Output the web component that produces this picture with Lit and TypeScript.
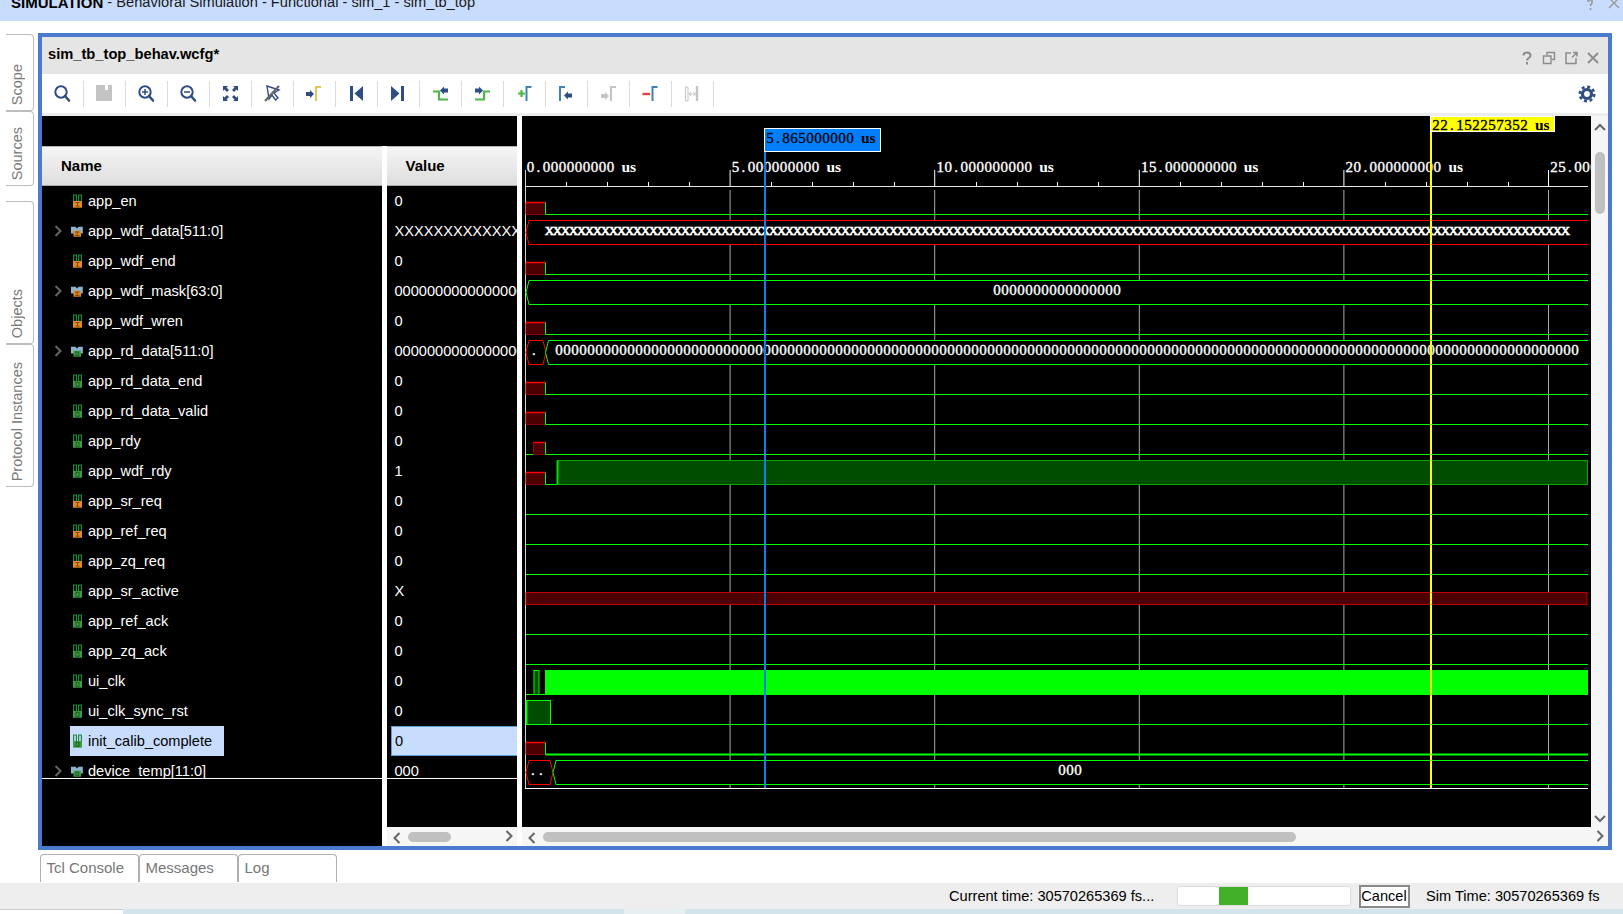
import { LitElement, html, css, svg } from "lit";
import { customElement } from "lit/decorators.js";

type Sig = { n: string; v: string; bus?: boolean; out?: boolean };
const Z16 = "0".repeat(16);
const signals: Sig[] = [
  { n: "app_en", v: "0" },
  { n: "app_wdf_data[511:0]", v: "X".repeat(128), bus: true },
  { n: "app_wdf_end", v: "0" },
  { n: "app_wdf_mask[63:0]", v: Z16, bus: true },
  { n: "app_wdf_wren", v: "0" },
  { n: "app_rd_data[511:0]", v: "0".repeat(128), bus: true, out: true },
  { n: "app_rd_data_end", v: "0", out: true },
  { n: "app_rd_data_valid", v: "0", out: true },
  { n: "app_rdy", v: "0", out: true },
  { n: "app_wdf_rdy", v: "1", out: true },
  { n: "app_sr_req", v: "0" },
  { n: "app_ref_req", v: "0" },
  { n: "app_zq_req", v: "0" },
  { n: "app_sr_active", v: "X", out: true },
  { n: "app_ref_ack", v: "0", out: true },
  { n: "app_zq_ack", v: "0", out: true },
  { n: "ui_clk", v: "0", out: true },
  { n: "ui_clk_sync_rst", v: "0", out: true },
  { n: "init_calib_complete", v: "0", out: true },
  { n: "device_temp[11:0]", v: "000", bus: true, out: true },
];
const SELECTED = 18;
const END = 1588;
const RED = "#ff0000", GRN = "#00ff00", DRED = "#4d0000", DGRN = "#004d00";
const NAVY = "#2f4c84", GREY = "#c4c4c4", BLUE = "#3f82b8", GG = "#4cb848", YEL = "#e2c95e";

const low = (i: number) => 214.5 + 30 * i;
const high = (i: number) => 202.5 + 30 * i;
const btop = (i: number) => 190.5 + 30 * i;
const bbot = (i: number) => 214.5 + 30 * i;

const line = (x1: number, y1: number, x2: number, y2: number, c: string, w = 1) =>
  svg`<line x1=${x1} y1=${y1} x2=${x2} y2=${y2} stroke=${c} stroke-width=${w}></line>`;

const xBox = (i: number, x0 = 526, x1 = 545.5) => svg`
  <rect x=${x0} y=${high(i)} width=${x1 - x0} height=${low(i) - high(i)} fill=${DRED}></rect>
  ${line(x0, high(i), x0, low(i), "#900000")}
  ${line(x0, low(i), x1, low(i), "#900000")}
  ${line(x0, high(i), x1, high(i), RED, 1.5)}
  ${line(x1, high(i), x1, low(i), GRN)}`;

const busPath = (i: number, x0: number, x1: number | null) => {
  const t = btop(i), b = bbot(i), m = (t + b) / 2;
  return x1 === null
    ? `M${END} ${t}H${x0 + 3}L${x0} ${m}L${x0 + 3} ${b}H${END}`
    : `M${x0 + 3} ${t}H${x1 - 3}L${x1} ${m}L${x1 - 3} ${b}H${x0 + 3}L${x0} ${m}Z`;
};
const bus = (i: number, x0: number, x1: number | null, c: string) =>
  svg`<path d=${busPath(i, x0, x1)} fill="#000" stroke=${c} stroke-width="1"></path>`;

// Bitmap-style fixed pitch: every glyph of a serif face sits in its own 8px cell.
const cellX = (x: number, t: string) =>
  [...t].map((ch, k) => x + 8 * k + (ch === "." ? 2 : ch === "X" ? -0.7 : 0.2)).join(" ");
const wtext = (x: number, y: number, t: string, cls = "mono") =>
  svg`<text class=${cls} x=${cellX(x, t)} y=${y} fill="#fff" stroke="#fff">${t}</text>`;
const timeText = (x: number, y: number, t: string, fill: string) =>
  svg`<text class="mono" x=${cellX(x, t + " ")} y=${y} fill=${fill} stroke=${fill}>${t} <tspan class="b" x=${`${x + 8 * (t.length + 1) - 1} ${x + 8 * (t.length + 2) - 0.5}`}>us</tspan></text>`;

function waves() {
  const gx = [0, 1, 2, 3, 4, 5].map((k) => 525.5 + 204.6 * k);
  const ticks: number[] = [];
  for (let k = 1; k < 26; k++) if (k % 5) ticks.push(525.5 + 40.92 * k);
  return svg`
    <svg class="wave" viewBox="522 116 1069 711" width="1069" height="711">
      ${gx.map((x) => line(x, 190, x, 788, "#a8a8a8"))}
      ${gx.map((x) => line(x, 170, x, 186, "#fff"))}
      ${line(525.5, 170, 525.5, 788, "#d0d0d0")}
      ${line(525, 186.5, END, 186.5, "#e8e8e8")}
      ${ticks.map((x) => line(Math.round(x) + 0.5, 182, Math.round(x) + 0.5, 186, "#fff"))}
      ${["0.000000000", "5.000000000", "10.000000000", "15.000000000", "20.000000000", "25.000000000"].map(
        (t, k) => timeText(k === 0 ? 526.5 : gx[k] + 1.5, 171.5, t, "#fff")
      )}

      ${xBox(0)}${line(545.5, low(0), END, low(0), GRN)}
      ${bus(1, 526, null, RED)}${wtext(545.5, btop(1) + 14, signals[1].v, "mono xs")}
      ${xBox(2)}${line(545.5, low(2), END, low(2), GRN)}
      ${bus(3, 526, null, GRN)}${wtext(993, btop(3) + 14.5, Z16)}
      ${xBox(4)}${line(545.5, low(4), END, low(4), GRN)}
      ${bus(5, 526, 546, RED)}${bus(5, 545.5, null, GRN)}${wtext(530, btop(5) + 14.5, ".")}${wtext(555, btop(5) + 14.5, signals[5].v)}
      ${xBox(6)}${line(545.5, low(6), END, low(6), GRN)}
      ${xBox(7)}${line(545.5, low(7), END, low(7), GRN)}
      ${line(526, low(8), 533.5, low(8), GRN)}${xBox(8, 533.5)}${line(545.5, low(8), END, low(8), GRN)}
      ${xBox(9)}${line(545.5, low(9), 557.5, low(9), GRN)}
      <rect x="557.5" y="460.5" width=${END - 558} height="24" fill=${DGRN} stroke="#00a800" stroke-width="1"></rect>
      ${line(557.5, 460.5, 557.5, 484.5, "#00e000", 2)}
      ${line(526, low(10), END, low(10), GRN)}
      ${line(526, low(11), END, low(11), GRN)}
      ${line(526, low(12), END, low(12), GRN)}
      <rect x="526" y="592.5" width=${END - 527} height="12" fill=${DRED} stroke="#c00000" stroke-width="1"></rect>
      ${line(526, low(14), END, low(14), GRN)}
      ${line(526, low(15), END, low(15), GRN)}
      ${line(526, 694.5, 534, 694.5, GRN)}
      <rect x="534" y="670.5" width="5" height="24" fill=${DGRN} stroke=${GRN} stroke-width="1"></rect>
      ${line(539, 694.5, 545, 694.5, GRN)}
      <rect x="545" y="670" width=${END - 545} height="25" fill=${GRN}></rect>
      <rect x="526.5" y="700.5" width="24" height="24" fill=${DGRN} stroke=${GRN} stroke-width="1"></rect>
      ${line(526.5, 700.5, 526.5, 724.5, GRN, 2)}
      ${line(550.5, low(17), END, low(17), GRN)}
      ${xBox(18, 526, 545.5)}${line(545.5, low(18), END, low(18), GRN, 2)}
      ${bus(19, 526, 553, RED)}${bus(19, 553, null, GRN)}${wtext(529, btop(19) + 14.5, "..")}${wtext(1058, btop(19) + 14.5, "000")}
      ${line(525, 788.5, END, 788.5, "#fff")}

      ${line(765, 152, 765, 788, "#0a80e8", 2)}
      <rect x="764.5" y="128.5" width="116" height="23" fill="#0080ff" stroke="#fff" stroke-width="1"></rect>
      ${timeText(766, 143, "5.865000000", "#000")}
      ${line(1431, 131, 1431, 788, "#ffff00", 2)}
      <rect x="1430.5" y="116.5" width="124" height="15" fill="#ffff00" stroke="#fff" stroke-width="1"></rect>
      ${timeText(1432, 129.5, "22.152257352", "#000")}
    </svg>`;
}

const sigIcon = (s: Sig) => {
  const c = s.out ? "#3f9a45" : "#e58a22";
  const letter = s.out ? "#1f5f25" : "#7a4a10";
  if (s.bus) {
    return svg`<svg class="sig" viewBox="0 0 16 16" width="16" height="16">
      <path d="M2 3.7H6.5L8 5.5L9.5 3.7H13.8V10.5H2Z" fill="#8db4cf"></path>
      <rect x="4.5" y="7.7" width="7.5" height="6" fill=${c}></rect>
      ${s.out
        ? svg`<rect x="6.8" y="9" width="2.8" height="3.4" fill="none" stroke=${letter}></rect>`
        : svg`<path d="M6 9H10.5M8.2 9V12.4M6 12.4H10.5" fill="none" stroke=${letter}></path>`}
    </svg>`;
  }
  return svg`<svg class="sig" viewBox="0 0 16 16" width="16" height="16">
    <path d="M4.6 8V2H7.4V8M9.6 8V2H12.4V8" fill="none" stroke="#1f8a3a" stroke-width="1.2"></path>
    <rect x="4" y="8" width="9" height="6.7" fill=${c}></rect>
    ${s.out
      ? svg`<rect x="7" y="9.3" width="3" height="4" fill="none" stroke=${letter}></rect>`
      : svg`<path d="M6.5 9.5H10.5M8.5 9.5V13.2M6.5 13.2H10.5" fill="none" stroke=${letter}></path>`}
  </svg>`;
};

const mag = svg`<circle cx="11" cy="11" r="5.7" fill="none" stroke=${NAVY} stroke-width="2"></circle>
  <path d="M15 15L19 19.5" stroke=${NAVY} stroke-width="2.6" stroke-linecap="round"></path>`;
const gam = (x: number, c: string, w = 6) =>
  svg`<path d="M${x + 1} 20V6H${x + w}" fill="none" stroke=${c} stroke-width="2"></path>`;
const arrR = (x: number, y: number, c: string) =>
  svg`<path d="M${x} ${y - 2}H${x + 4}V${y - 4}L${x + 8} ${y}L${x + 4} ${y + 4}V${y + 2}H${x}Z" fill=${c}></path>`;
const arrL = (x: number, y: number, c: string) =>
  svg`<path d="M${x + 8} ${y - 2}H${x + 4}V${y - 4}L${x} ${y}L${x + 4} ${y + 4}V${y + 2}H${x + 8}Z" fill=${c}></path>`;

const toolIcons = [
  mag,
  svg`<path d="M4 4H20V20H4Z" fill=${GREY}></path><rect x="13" y="4" width="3" height="5" fill="#fff"></rect>`,
  svg`${mag}<path d="M8 11H14M11 8V14" stroke=${NAVY} stroke-width="1.5"></path>`,
  svg`${mag}<path d="M8 11H14" stroke=${NAVY} stroke-width="1.5"></path>`,
  svg`<path fill=${NAVY} d="M5 5H10L8.5 6.5L11 9L9 11L6.5 8.5L5 10ZM20 5V10L18.5 8.5L16 11L14 9L16.5 6.5L15 5ZM5 20V15L6.5 16.5L9 14L11 16L8.5 18.5L10 20ZM20 20H15L16.5 18.5L14 16L16 14L18.5 16.5L20 15Z"></path>`,
  svg`<path d="M7 5L19 9L14 12L18 17L15.5 19L12 14L9 18Z" fill="none" stroke=${NAVY} stroke-width="1.4"></path><path d="M5 20L19 5" stroke="#666" stroke-width="2.2"></path>`,
  svg`${arrR(4, 13, NAVY)}${gam(13, YEL)}`,
  svg`<path d="M6 5H9V20H6Z" fill=${NAVY}></path><path d="M19 5V20L10.5 12.5Z" fill=${NAVY}></path>`,
  svg`<path d="M15 5H18V20H15Z" fill=${NAVY}></path><path d="M5 5V20L13.5 12.5Z" fill=${NAVY}></path>`,
  svg`<path d="M5 10.5H11V18.5H20" fill="none" stroke=${GG} stroke-width="2.2"></path>${arrL(12, 9.5, NAVY)}`,
  svg`<path d="M5 18.5H14V10.5H20" fill="none" stroke=${GG} stroke-width="2.2"></path>${arrR(5, 9.5, NAVY)}`,
  svg`<path d="M6 12.5H13M9.5 9V16" stroke=${GG} stroke-width="2.2"></path>${gam(13.5, BLUE)}`,
  svg`${gam(5, BLUE)}${arrL(10, 14.5, NAVY)}`,
  svg`${arrR(5, 15, GREY)}${gam(14, GREY)}`,
  svg`<path d="M4.5 13H12" stroke="#e8403f" stroke-width="2.4"></path>${gam(13.5, BLUE)}`,
  svg`<path d="M5.5 6H8V20H5.5Z" fill="none" stroke=${GREY} stroke-width="1"></path><path d="M17 5V20" stroke=${GREY} stroke-width="2.4"></path><path d="M9 13H15.5M9 13L11 11M9 13L11 15M15.5 13L13.5 11M15.5 13L13.5 15" fill="none" stroke=${GREY}></path>`,
];

const chev = (d: string, c = "#666") =>
  svg`<svg class="chev" viewBox="0 0 10 14" width="10" height="14"><path d=${d} fill="none" stroke=${c} stroke-width="2"></path></svg>`;
const L = chev("M7.5 2L2.5 7L7.5 12");
const R = chev("M2.5 2L7.5 7L2.5 12");

@customElement("app-root")
export class AppRoot extends LitElement {
  static styles = css`
    :host { display: block; width: 1623px; height: 914px; overflow: hidden; background: #fff;
      font-family: "Liberation Sans", Arial, sans-serif; font-size: 14.5px; color: #000; }
    .root { display: flex; flex-direction: column; width: 1623px; height: 914px; }
    .top { height: 21px; flex: none; background: #c8dcfd; position: relative; overflow: hidden;
      display: flex; padding-left: 11px; line-height: 5px; font-size: 14.65px; color: #1a1a1a; }
    .top b { color: #000; white-space: pre; font-size: 15px; }
    .top-ic { margin-left: auto; display: flex; gap: 10px; padding-right: 3px; height: 10px; }
    .mid { height: 833px; flex: none; display: flex; }
    .side { width: 38px; flex: none; display: flex; flex-direction: column; padding-top: 13px; box-sizing: border-box; }
    .vtab { margin-left: 6px; width: 27.5px; box-sizing: border-box; border: 1px solid #bdbdbd; border-left: none;
      border-radius: 0 4px 4px 0; display: flex; align-items: flex-end; justify-content: center; color: #7a7a7a;
      font-size: 14.5px; padding-right: 4px; }
    .vtab span { writing-mode: vertical-rl; transform: rotate(180deg); padding-top: 5px; }
    .h76 { height: 77px; } .h75 { height: 75px; } .h142 { height: 143px; margin-top: 15px; }
    .h142b { height: 143px; }
    .frame { margin-top: 12px; width: 1574px; height: 817px; box-sizing: border-box; border: 4px solid #4a7bcd;
      display: flex; flex-direction: column; background: #fff; }
    .title { height: 37px; flex: none; background: #e5e5e5; display: flex; align-items: center; padding-left: 6px;
      font-weight: bold; font-size: 14.7px; }
    .title span { padding-bottom: 4px; }
    .wctl { margin-left: auto; display: flex; align-items: center; gap: 6px; padding: 5px 7px 0 0; }
    .wctl svg { display: block; }
    .tools { height: 39px; flex: none; display: flex; align-items: center; background: #fff; }
    .tb { width: 42px; height: 26px; box-sizing: border-box; border-right: 1px solid #dcdcdc; padding-right: 2px; display: flex;
      align-items: center; justify-content: center; }
    .tb svg { display: block; margin-top: -2px; }
    .gear { margin-left: auto; margin-right: 12px; display: block; }
    .sep { height: 3px; flex: none; background: #ececec; }
    .body { height: 730px; flex: none; display: grid; grid-template-columns: 340px 130px 1086px; column-gap: 5px; }
    .pane { display: flex; flex-direction: column; }
    .name { background: #000; height: 730px; }
    .spacer { height: 30px; flex: none; background: #000; }
    .spacer.wide { width: 345px; }
    .hdr { height: 40px; flex: none; box-sizing: border-box; background: linear-gradient(#f5f5f5, #dedede);
      border-top: 1px solid #b5b5b5; border-bottom: 1px solid #a8a8a8; font-weight: bold; font-size: 15px;
      display: flex; align-items: center; padding-bottom: 2px; }
    .hdr.n { padding-left: 19px; } .hdr.v { padding-left: 18.5px; }
    .list { height: 592px; flex: none; overflow: hidden; background: #000; color: #fff; font-size: 14.6px; }
    .rule { height: 1px; flex: none; background: #fff; }
    .row { height: 30px; display: flex; align-items: center; white-space: nowrap; overflow: hidden; }
    .row .exp { width: 28px; flex: none; display: flex; justify-content: flex-end; padding-right: 7px; box-sizing: border-box; }
    .sig { display: block; margin-left: -1px; }
    .nm { display: flex; align-items: center; height: 30px; padding: 0 12px 0 0; box-sizing: border-box; }
    .nm.sel { background: #c8dcfd; color: #000; }
    .nm .t { margin-left: 3px; }
    .vcell { height: 30px; line-height: 30px; padding-left: 7.5px; box-sizing: border-box; white-space: nowrap; overflow: hidden; }
    .vcell.sel { background: #c8dcfd; color: #000; border: 1px solid #5aa0d8; border-right: none; margin-left: 4px; padding-left: 3px; line-height: 28px; }
    .fill { flex: 1; background: #000; }
    .hs { height: 19px; flex: none; background: #f6f6f6; display: flex; align-items: center; }
    .hs .chev { margin-left: 5px; margin-top: 2px; }
    .thumb { height: 10px; border-radius: 5px; background: #c0c0c0; margin-left: 6px; }
    .hs .end { margin-left: auto; margin-right: 3px; }
    .wavearea { display: grid; grid-template-columns: 1069px 17px; grid-template-rows: 711px 19px; }
    .wave { display: block; background: #000; }
    .mono { font-family: "Liberation Serif", "Times New Roman", serif; font-size: 15px; stroke-width: 0.35px; }
    .xs { font-size: 13px; stroke-width: 0.7px; }
    .b { font-weight: bold; font-size: 15.5px; stroke-width: 0; }
    .vs { background: #f6f6f6; display: flex; flex-direction: column; align-items: center; }
    .vs svg { display: block; }
    .vs .up { margin-top: 6px; }
    .vthumb { width: 10px; height: 62px; border-radius: 5px; background: #c0c0c0; margin-top: 20px; }
    .vs .dn { margin-top: auto; margin-bottom: 3px; }
    .hs2 { grid-column: 1 / 3; }
    .tabs { height: 29px; flex: none; display: flex; padding-left: 39.5px; align-items: flex-start; }
    .tab { width: 99px; height: 28px; box-sizing: border-box; border: 1px solid #b0b0b0; border-bottom: none; border-radius: 4px 4px 0 0;
      padding-left: 6px; line-height: 26px; color: #777; font-size: 15px; }
    .status { height: 26px; flex: none; background: #eee; display: flex; align-items: center; padding-left: 949px; box-sizing: border-box; font-size: 14.6px; }
    .cur { width: 227.5px; flex: none; white-space: nowrap; }
    .prog { width: 174px; height: 20px; box-sizing: border-box; flex: none; background: #fff; border: 1px solid #ddd; border-radius: 3px; display: flex; }
    .bar { width: 29px; margin-left: 41.5px; background: #43b02a; }
    .cancel { margin-left: 8px; width: 51px; height: 23px; box-sizing: border-box; border: 2px solid #8a8a8a; background: #fff;
      text-align: center; line-height: 19px; flex: none; }
    .sim { margin-left: 16.5px; white-space: nowrap; }
    .strip { flex: 1; display: grid; grid-template-columns: 123px 501px 61px 1fr; }
    .s0 { background: #fff; border-top: 1px solid #ccc; } .s1 { background: #d3e4ea; } .s2 { background: #e8eff1; }
  `;

  render() {
    return html`<div class="root">
      <div class="top">
        <b>SIMULATION</b><span>&nbsp;- Behavioral Simulation - Functional - sim_1 - sim_tb_top</span>
        <div class="top-ic">
          <svg viewBox="0 0 12 10" width="12" height="10"><path d="M2 0V1H4M4 0H6V3L4.5 5V6M4.5 8V10" fill="none" stroke="#999" stroke-width="1.6"></path></svg>
          <svg viewBox="0 0 12 10" width="12" height="10"><path d="M1 -2L11 8M11 -2L1 8" stroke="#999" stroke-width="1.4"></path></svg>
        </div>
      </div>

      <div class="mid">
        <div class="side">
          <div class="vtab h76"><span>Scope</span></div>
          <div class="vtab h75"><span>Sources</span></div>
          <div class="vtab h142"><span>Objects</span></div>
          <div class="vtab h142b"><span>Protocol Instances</span></div>
        </div>
        <div class="frame">
          <div class="title"><span>sim_tb_top_behav.wcfg*</span>
            <div class="wctl">
              <svg viewBox="0 0 16 16" width="16" height="16"><path d="M4.5 5.5C4.5 1.5 11.5 1.5 11.5 5.5C11.5 8 8 8 8 10.5M8 12V14.5" fill="none" stroke="#8c8c8c" stroke-width="2"></path></svg>
              <svg viewBox="0 0 16 16" width="16" height="16"><path d="M6 5V2.5H13.5V9.5H11M2.5 6H10V13.5H2.5Z" fill="none" stroke="#8c8c8c" stroke-width="1.4"></path></svg>
              <svg viewBox="0 0 16 16" width="16" height="16"><path d="M8 3H3V13.5H13V8M9 7.5L14 2.5M10 2.5H14V6.5" fill="none" stroke="#8c8c8c" stroke-width="1.5"></path></svg>
              <svg viewBox="0 0 16 16" width="16" height="16"><path d="M3 3L13 13M13 3L3 13" stroke="#8c8c8c" stroke-width="1.8"></path></svg>
            </div>
          </div>
          <div class="tools">
            ${toolIcons.map((ic) => html`<div class="tb"><svg viewBox="0 0 24 24" width="24" height="24">${ic}</svg></div>`)}
            <svg class="gear" viewBox="0 0 20 20" width="18" height="18">
              <circle cx="10" cy="10" r="5" fill="none" stroke="${NAVY}" stroke-width="3.6"></circle>
              <circle cx="10" cy="10" r="8" fill="none" stroke="${NAVY}" stroke-width="3" stroke-dasharray="3.3 2.98"></circle>
            </svg>
          </div>
          <div class="sep"></div>
          <div class="body">
            <div class="pane name">
              <div class="spacer wide"></div>
              <div class="hdr n">Name</div>
              <div class="list">
                ${signals.map((s, i) => html`<div class="row">
                  <div class="exp">${s.bus ? R : ""}</div>
                  <div class="nm ${i === SELECTED ? "sel" : ""}">${sigIcon(s)}<span class="t">${s.n}</span></div>
                </div>`)}
              </div>
              <div class="rule"></div>
              <div class="fill"></div>
            </div>
            <div class="pane">
              <div class="spacer"></div>
              <div class="hdr v">Value</div>
              <div class="list">
                ${signals.map((s, i) => html`<div class="vcell ${i === SELECTED ? "sel" : ""}">${s.v}</div>`)}
              </div>
              <div class="rule"></div>
              <div class="fill"></div>
              <div class="hs">${L}<div class="thumb" style="width:43px"></div><span class="end">${R}</span></div>
            </div>
            <div class="wavearea">
              ${waves()}
              <div class="vs">
                <svg class="up" viewBox="0 0 14 10" width="14" height="10"><path d="M2 8L7 3L12 8" fill="none" stroke="#666" stroke-width="2"></path></svg>
                <div class="vthumb"></div>
                <svg class="dn" viewBox="0 0 14 10" width="14" height="10"><path d="M2 2L7 7L12 2" fill="none" stroke="#666" stroke-width="2"></path></svg>
              </div>
              <div class="hs hs2">${L}<div class="thumb" style="width:753px"></div><span class="end">${R}</span></div>
            </div>
          </div>
        </div>
      </div>

      <div class="tabs">
        <div class="tab">Tcl Console</div><div class="tab">Messages</div><div class="tab">Log</div>
      </div>
      <div class="status">
        <div class="cur">Current time: 30570265369 fs...</div>
        <div class="prog"><div class="bar"></div></div>
        <div class="cancel">Cancel</div>
        <div class="sim">Sim Time: 30570265369 fs</div>
      </div>
      <div class="strip"><div class="s0"></div><div class="s1"></div><div class="s2"></div><div class="s1"></div></div>
    </div>`;
  }
}
